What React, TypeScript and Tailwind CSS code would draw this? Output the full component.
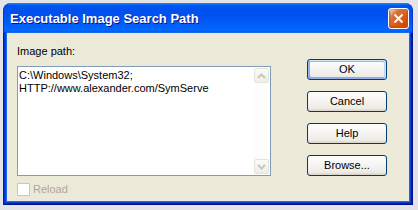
import React from "react";

function ScrollArrow({ up }: { up: boolean }) {
  return (
    <div className="w-[15px] h-[15px] rounded-[2px] border border-[#e6e4da] bg-[linear-gradient(180deg,#fbfbf8,#eeede6)] flex items-center justify-center">
      <svg width="9" height="6" viewBox="0 0 9 6">
        <path
          d={up ? "M1 5 L4.5 1.5 L8 5" : "M1 1 L4.5 4.5 L8 1"}
          fill="none"
          stroke="#c9c7ba"
          strokeWidth="2"
        />
      </svg>
    </div>
  );
}

function XPButton({ label, isDefault }: { label: string; isDefault?: boolean }) {
  return (
    <div
      className={
        "w-[80px] h-[21px] rounded-[3px] border border-[#003c74] bg-[linear-gradient(180deg,#ffffff,#ecebe6_86%,#d6d0c5)] flex items-center justify-center text-[11px] leading-[13px] text-black " +
        (isDefault
          ? "shadow-[inset_-1px_1px_#cee7ff,inset_1px_2px_#98b8ea,inset_-2px_2px_#bcd4f6,inset_1px_-1px_#89ade4,inset_2px_-2px_#89ade4]"
          : "")
      }
    >
      {label}
    </div>
  );
}

export default function App() {
  return (
    <div
      className="w-[418px] h-[210px] bg-[#e4e3e6] pt-[3px] pl-[3px]"
      style={{ fontFamily: '"Liberation Sans", Arial, sans-serif' }}
    >
      <div className="w-[410px] h-[202px] flex flex-col">
        {/* Title bar */}
        <div className="h-[30px] rounded-t-[8px] bg-[linear-gradient(180deg,#0997ff,#0053ee_8%,#0050ee_40%,#0066ff_88%,#0066ff_93%,#005bff_95%,#003dd7_96%,#003dd7)] flex items-center pl-[7px] pr-[4px] shadow-[inset_1px_0_#0831d9,inset_-1px_0_#0831d9]">
          <div className="flex-1 text-white font-bold text-[13px] leading-[16px] pt-[1px] [text-shadow:1px_1px_#0f1089]">
            Executable Image Search Path
          </div>
          <div className="w-[21px] h-[21px] rounded-[3px] border border-white bg-[radial-gradient(circle_at_90%_90%,#cc4600_0,#dc6527_55%,#cd7546_70%,#ffccb2_90%,#ffffff_100%)] shadow-[inset_0_-1px_2px_1px_#da4600] flex items-center justify-center mt-[1px]">
            <svg width="11" height="11" viewBox="0 0 11 11">
              <path d="M1.5 1.5 L9.5 9.5 M9.5 1.5 L1.5 9.5" stroke="#ffffff" strokeWidth="2" />
            </svg>
          </div>
        </div>
        {/* Frame */}
        <div className="flex-1 bg-[#0842d6] px-[4px] pb-[4px] flex shadow-[inset_1px_0_#001ea0,inset_-1px_0_#00138c,inset_0_-1px_#00138c,inset_2px_0_#0831d9,inset_-2px_0_#001ea0,inset_0_-2px_#001ea0]">
          <div className="flex-1 bg-[#ece9d8] flex shadow-[0_0_0_1px_#166aee]">
            {/* Left column */}
            <div className="ml-[10px] pt-[12px] w-[254px] flex flex-col">
              <div className="text-[11px] leading-[13px] text-black">Image path:</div>
              <div className="mt-[8px] h-[110px] border border-[#7f9db9] bg-white flex">
                <div className="flex-1 pl-[1px] pt-[2px] text-[11px] leading-[13px] text-black whitespace-pre">
                  {"C:\\Windows\\System32;\nHTTP://www.alexander.com/SymServe"}
                </div>
                <div className="w-[17px] bg-[#fdfdfb] flex flex-col justify-between p-[1px]">
                  <ScrollArrow up />
                  <ScrollArrow up={false} />
                </div>
              </div>
              <div className="mt-[7px] flex items-center">
                <div className="w-[13px] h-[13px] border border-[#cac8bb] bg-white" />
                <div className="ml-[3px] text-[11px] leading-[13px] text-[#aca899]">Reload</div>
              </div>
            </div>
            {/* Right column */}
            <div className="ml-[36px] pt-[26px] flex flex-col gap-[11px]">
              <XPButton label="OK" isDefault />
              <XPButton label="Cancel" />
              <XPButton label="Help" />
              <XPButton label="Browse..." />
            </div>
          </div>
        </div>
      </div>
    </div>
  );
}
